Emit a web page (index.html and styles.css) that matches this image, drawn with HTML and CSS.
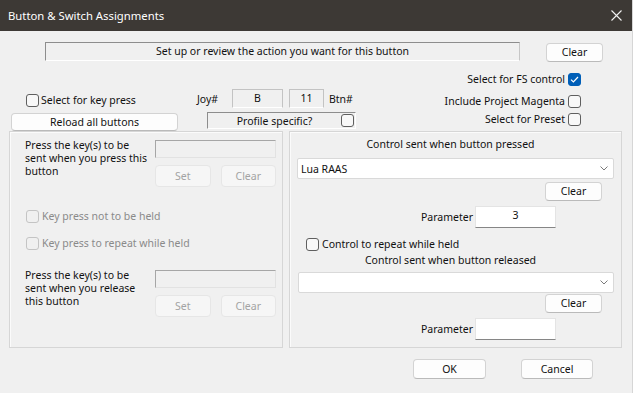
FILE: index.html
```html
<!DOCTYPE html>
<html lang="en">
<head>
    <meta charset="UTF-8">
    <title>Button &amp; Switch Assignments</title>
    <link rel="stylesheet" href="styles.css">
</head>
<body>
    <div class="window">
        <div class="titlebar">
            <span class="title">Button &amp; Switch Assignments</span>
            <svg class="close" width="11" height="11" viewBox="0 0 11 11">
                <path d="M0.5 0.5L10.5 10.5M10.5 0.5L0.5 10.5" stroke="#f2f2f2" stroke-width="1.1" fill="none"/>
            </svg>
        </div>

        <div class="top-row">
            <div class="status">Set up or review the action you want for this button</div>
            <button class="btn top-clear">Clear</button>
        </div>

        <div class="head">
            <div class="head-left">
                <label class="check key-check"><span class="box"></span>Select for key press</label>
                <button class="btn reload">Reload all buttons</button>
            </div>

            <div class="head-mid">
                <div class="joy-row">
                    <span class="joy-label">Joy#</span>
                    <span class="field joy">B</span>
                    <span class="field btn-no">11</span>
                    <span class="btn-label">Btn#</span>
                </div>
                <div class="profile">
                    <span class="profile-text">Profile specific?</span>
                    <span class="box"></span>
                </div>
            </div>

            <div class="head-right">
                <label class="check opt opt-fs">Select for FS control
                    <span class="box checked">
                        <svg width="9" height="7" viewBox="0 0 9 7"><path d="M1 3.6L3.4 6L8 1" stroke="#fff" stroke-width="1.2" fill="none"/></svg>
                    </span>
                </label>
                <label class="check opt opt-magenta">Include Project Magenta<span class="box"></span></label>
                <label class="check opt opt-preset">Select for Preset<span class="box"></span></label>
            </div>
        </div>

        <div class="groups">
            <div class="group key-group">
                <div class="key-row">
                    <div class="key-text">Press the key(s) to be sent when you press this button</div>
                    <div class="key-controls">
                        <div class="key-field"></div>
                        <div class="key-buttons">
                            <button class="btn disabled">Set</button>
                            <button class="btn disabled">Clear</button>
                        </div>
                    </div>
                </div>

                <label class="check muted held"><span class="box"></span>Key press not to be held</label>
                <label class="check muted repeat"><span class="box"></span>Key press to repeat while held</label>

                <div class="key-row release">
                    <div class="key-text">Press the key(s) to be sent when you release this button</div>
                    <div class="key-controls">
                        <div class="key-field"></div>
                        <div class="key-buttons">
                            <button class="btn disabled">Set</button>
                            <button class="btn disabled">Clear</button>
                        </div>
                    </div>
                </div>
            </div>

            <div class="group control-group">
                <div class="caption">Control sent when button pressed</div>
                <div class="select">
                    <span>Lua RAAS</span>
                    <svg width="8" height="5" viewBox="0 0 8 5"><path d="M0.5 0.5L4 4L7.5 0.5" stroke="#7a7a7a" fill="none"/></svg>
                </div>
                <div class="clear-row"><button class="btn">Clear</button></div>
                <div class="param-row">
                    <span class="param-label">Parameter</span>
                    <div class="param-field">3</div>
                </div>

                <label class="check repeat-held"><span class="box"></span>Control to repeat while held</label>

                <div class="caption released">Control sent when button released</div>
                <div class="select second">
                    <span></span>
                    <svg width="8" height="5" viewBox="0 0 8 5"><path d="M0.5 0.5L4 4L7.5 0.5" stroke="#7a7a7a" fill="none"/></svg>
                </div>
                <div class="clear-row second"><button class="btn">Clear</button></div>
                <div class="param-row">
                    <span class="param-label">Parameter</span>
                    <div class="param-field"></div>
                </div>
            </div>
        </div>

        <div class="footer">
            <button class="btn ok">OK</button>
            <button class="btn cancel">Cancel</button>
        </div>
    </div>
</body>
</html>
```

FILE: styles.css
```css
* {
    margin: 0;
    padding: 0;
    box-sizing: border-box;
}

body {
    font-family: "Noto Sans", "Open Sans", sans-serif;
    font-size: 10.5px;
    color: #111;
    background: #f0f0f0;
}

.window {
    width: 633px;
    height: 393px;
    background: #f0f0f0;
    border-right: 1px solid #d6d6d6;
}

.titlebar {
    height: 31px;
    background: #3d3935;
    color: #fff;
    display: flex;
    align-items: center;
    justify-content: space-between;
    padding-left: 8px;
    font-size: 11.3px;
}

.close {
    margin-right: 10px;
}

/* buttons */

.btn {
    font: inherit;
    color: #111;
    background: #fdfdfd;
    border: 1px solid #d3d3d3;
    border-bottom-color: #bababa;
    border-radius: 4px;
    height: 20px;
    line-height: 17px;
}

.btn.disabled {
    color: #a3a3a3;
    background: #f6f6f6;
    border-color: #e6e6e6;
}

/* checkboxes */

.check {
    display: flex;
    align-items: center;
    height: 14px;
    gap: 3px;
}

.box {
    width: 13px;
    height: 13px;
    border: 1px solid #5f5f5f;
    border-radius: 3px;
    background: #f8f8f8;
    display: flex;
    align-items: center;
    justify-content: center;
    flex-shrink: 0;
}

.box.checked {
    background: #005fb8;
    border-color: #005fb8;
}

.check.muted {
    color: #8a8a8a;
}

.check.muted .box {
    border-color: #c4c4c4;
    background: #f0f0f0;
}

/* top row */

.top-row {
    display: flex;
    align-items: flex-start;
    margin-top: 11px;
}

.status {
    margin-left: 45px;
    width: 475px;
    height: 19px;
    border: 1px solid;
    border-color: #8d8d8d #c6c6c6 #fff #8d8d8d;
    text-align: center;
    line-height: 16px;
}

.top-clear {
    margin-left: 26px;
    margin-top: 1px;
    width: 57px;
    height: 19px;
}

/* head area */

.head {
    display: flex;
    height: 69px;
}

.head-left {
    margin-left: 11px;
    width: 167px;
    padding-top: 31px;
}

.key-check {
    margin-left: 15px;
    gap: 2px;
}

.reload {
    width: 167px;
    height: 18px;
    margin-top: 6px;
    line-height: 15px;
}

.head-mid {
    margin-left: 19px;
    padding-top: 27px;
}

.joy-row {
    display: flex;
    align-items: center;
    height: 19px;
}

.joy-label {
    width: 35px;
}

.field {
    height: 19px;
    border: 1px solid #c3c3c3;
    border-bottom-color: #fff;
    text-align: center;
    line-height: 17px;
}

.joy {
    width: 51px;
}

.btn-no {
    width: 35px;
    margin-left: 6px;
}

.btn-label {
    margin-left: 5px;
}

.profile {
    display: flex;
    align-items: center;
    margin-left: 10px;
    margin-top: 4px;
    width: 149px;
    height: 17px;
    border: 1px solid;
    border-color: #8d8d8d #fff #fff #8d8d8d;
    padding-right: 1px;
}

.profile-text {
    flex: 1;
    text-align: center;
}

.head-right {
    margin-left: auto;
    margin-right: 51px;
    display: flex;
    flex-direction: column;
    align-items: flex-end;
    padding-top: 10px;
}

.opt-magenta {
    margin-top: 8px;
}

.opt-preset {
    margin-top: 4px;
}

/* group boxes */

.groups {
    display: flex;
    gap: 6px;
    padding-left: 9px;
}

.group {
    height: 217px;
    border: 1px solid #d6d6d6;
    box-shadow: inset 1px 1px 0 #fbfbfb;
}

.key-group {
    width: 274px;
    padding: 7px 0 0 15px;
}

.key-row {
    display: flex;
}

.key-text {
    width: 130px;
    padding-right: 7px;
    line-height: 13px;
}

.key-controls {
    width: 121px;
    padding-top: 1px;
}

.key-field {
    height: 18px;
    border: 1px solid #a6a6a6;
    border-bottom-color: #e2e2e2;
    border-right-color: #e2e2e2;
}

.key-buttons {
    display: flex;
    gap: 10px;
    margin-top: 7px;
}

.key-buttons .btn {
    width: 56px;
    height: 22px;
}

.held {
    margin-top: 22px;
    margin-left: 1px;
}

.repeat {
    margin-top: 13px;
    margin-left: 1px;
}

.key-row.release {
    margin-top: 19px;
}

.control-group {
    width: 333px;
    padding: 5px 7px 0 7px;
}

.caption {
    text-align: center;
    height: 14px;
    line-height: 14px;
    padding-right: 10px;
}

.select {
    margin-top: 7px;
    height: 21px;
    background: #fff;
    border: 1px solid #d9d9d9;
    border-radius: 2px;
    display: flex;
    align-items: center;
    justify-content: space-between;
    padding: 0 5px 0 3px;
}

.select.second {
    margin-top: 5px;
    margin-left: 1px;
}

.clear-row {
    display: flex;
    justify-content: flex-end;
    padding-right: 12px;
    margin-top: 3px;
}

.clear-row.second {
    margin-top: 1px;
}

.clear-row .btn {
    width: 57px;
    height: 19px;
}

.param-row {
    display: flex;
    align-items: center;
    margin-top: 5px;
    padding-left: 124px;
}

.param-label {
    width: 54px;
}

.param-field {
    width: 81px;
    height: 22px;
    background: #fff;
    border: 1px solid #e4e4e4;
    border-bottom-color: #868686;
    text-align: center;
    line-height: 17px;
}

.repeat-held {
    margin-top: 9px;
    margin-left: 9px;
    gap: 3px;
}

.caption.released {
    margin-top: 2px;
}

/* footer */

.footer {
    display: flex;
    justify-content: flex-end;
    gap: 35px;
    margin-top: 11px;
    padding-right: 39px;
}

.ok {
    width: 73px;
}

.cancel {
    width: 72px;
}
```
